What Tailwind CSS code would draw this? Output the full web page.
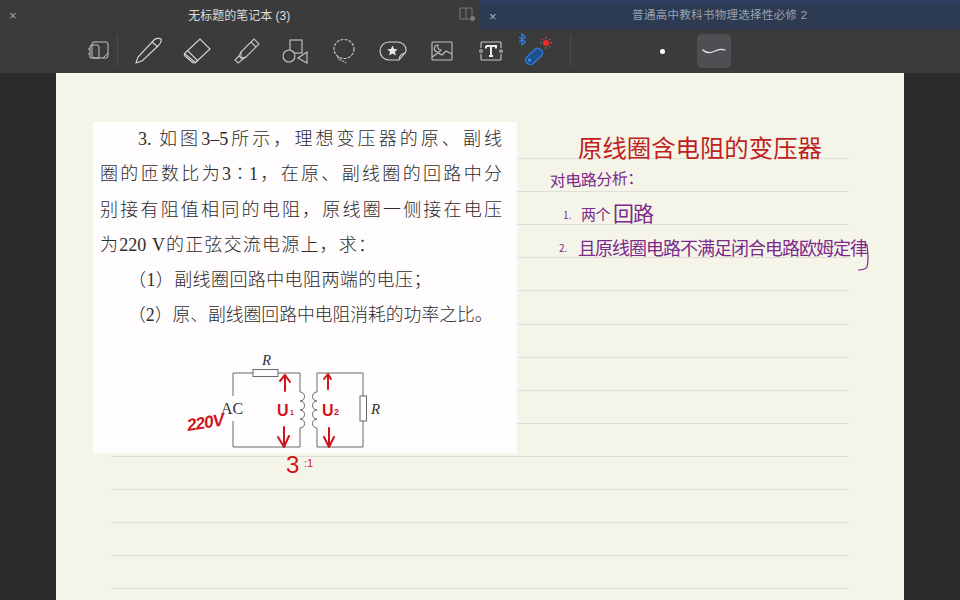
<!DOCTYPE html>
<html lang="zh-CN">
<head>
<meta charset="UTF-8">
<title>无标题的笔记本 (3)</title>
<script src="https://cdn.jsdelivr.net/npm/@tailwindcss/browser@4"></script>
</head>
<body class="w-[960px] h-[600px] overflow-hidden bg-[#2a2a2b] font-['Liberation_Sans','Noto_Sans_CJK_SC',sans-serif]">

  <!-- tabs -->
  <div class="flex h-[29px]">
    <div class="relative w-[480px] bg-[#3b3b3c] flex items-center pl-[9px] pt-[2px]">
      <span class="text-[#a5a5a5] text-[13px] leading-none">×</span>
      <span class="flex-1 text-center text-[#dcdcdc] text-[12px] pl-[3px]">无标题的笔记本 (3)</span>
      <svg class="w-[18px] h-[16px] mr-[3px] mb-[1px]" viewBox="0 0 18 16" fill="none" stroke="#7c7c7e" stroke-width="1">
        <rect x="1" y="1" width="12" height="11" rx="1" />
        <path d="M7 1v11" />
        <circle cx="13.5" cy="11.5" r="3" fill="#7c7c7e" stroke="#3b3b3c" />
      </svg>
    </div>
    <div class="w-[480px] bg-[#2c3a52] border-t-[3px] border-[#2e4163] flex items-center pl-[9px]">
      <span class="text-[#a6adba] text-[13px] leading-none">×</span>
      <span class="flex-1 text-center text-[#9aa2b0] text-[11.5px] tracking-[0.3px] pr-[17px]">普通高中教科书物理选择性必修 2</span>
    </div>
  </div>

  <!-- toolbar -->
  <div class="h-[44px] bg-[#3b3b3c] flex items-center pl-[83px]">
    <svg class="w-[30px] h-[30px] shrink-0" viewBox="0 0 30 30" fill="none" stroke="#c4c4c4" stroke-width="1">
      <rect x="9" y="6" width="16" height="16" rx="2" />
      <path d="M12 9h-3a2 2 0 0 0-2 2v11h9V11a2 2 0 0 0-2-2z M7 13H5 M7 18H5 M20 22l5-5" />
    </svg>
    <div class="w-px h-[32px] bg-[#4d4d4e] ml-[4px] mr-[15px] shrink-0"></div>
    <div class="flex items-center gap-[19px]">
      <!-- pen -->
      <svg class="w-[30px] h-[30px]" viewBox="0 0 30 30" fill="none" stroke="#d6d6d6" stroke-width="1.1">
        <path d="M3 27l2-6L21 4c2-2 6-2 7-1 1 2-1 5-3 7L9 25z" />
        <path d="M19 6l6 5" />
      </svg>
      <!-- eraser -->
      <svg class="w-[30px] h-[30px]" viewBox="0 0 30 30" fill="none" stroke="#d6d6d6" stroke-width="1.1">
        <path d="M3 17L18 3l10 10-14 13c-1 1-3 1-4 0l-7-6c-1-1-1-2 0-3z" />
        <path d="M3 18l11 9 M6 15l10 10" />
      </svg>
      <!-- highlighter -->
      <svg class="w-[30px] h-[30px]" viewBox="0 0 30 30" fill="none" stroke="#c8c8c8" stroke-width="1.1">
        <path d="M10 16L23 3l5 5-13 13-5 1z" />
        <path d="M10 16l-2 4 4 3 3-2 M8 20l-4 4 3 3 5-4 M20 6l5 5" />
      </svg>
      <!-- shapes -->
      <svg class="w-[30px] h-[30px]" viewBox="0 0 30 30" fill="none" stroke="#c8c8c8" stroke-width="1.1">
        <rect x="10" y="4" width="12" height="13" />
        <circle cx="9" cy="20" r="6" fill="#3b3b3c" />
        <path d="M27 16v11l-9-5z" fill="#3b3b3c" />
      </svg>
      <!-- lasso -->
      <svg class="w-[30px] h-[30px]" viewBox="0 0 30 30" fill="none" stroke="#c8c8c8" stroke-width="1.1">
        <ellipse cx="15" cy="13" rx="10" ry="9.5" stroke-dasharray="3 1.2" />
        <path d="M9 21c0 3 3 3 5 4l3 2" stroke-dasharray="2 1" />
      </svg>
      <!-- sticker -->
      <svg class="w-[30px] h-[30px]" viewBox="0 0 30 30" fill="none" stroke="#d6d6d6" stroke-width="1.1">
        <path d="M11 6h8c5 0 9 3 9 8 0 1 0 2-1 3l-6 7H11C6 24 2 20 2 15s4-9 9-9z" />
        <path d="M21 24c0-4 2-6 6-7" />
        <path d="M14.5 9.500l1.600 3.400 3.600.4-2.700 2.500.8 3.600-3.300-1.800-3.300 1.800.8-3.600-2.700-2.500 3.600-.4z" fill="#e8e8e8" stroke="none" />
      </svg>
      <!-- image -->
      <svg class="w-[30px] h-[30px]" viewBox="0 0 30 30" fill="none" stroke="#c0c0c0" stroke-width="1.1">
        <rect x="5" y="6" width="20" height="18" rx="1" />
        <path d="M5 21l6-4 4 2 4-4 6 3" />
        <path d="M11 9a3.500 3.500 0 1 0 3 5 3.500 3.500 0 0 1-3-5z" />
      </svg>
      <!-- text box -->
      <svg class="w-[30px] h-[30px]" viewBox="0 0 30 30" fill="none" stroke="#c8c8c8" stroke-width="1.1">
        <path d="M5 12V7a1 1 0 0 1 1-1h18a1 1 0 0 1 1 1v5 M25 18v5a1 1 0 0 1-1 1H6a1 1 0 0 1-1-1v-5" />
        <circle cx="5" cy="15" r="1.300" />
        <circle cx="25" cy="15" r="1.300" />
        <path d="M10 10h10v2.500 M10 10v2.500 M15 10v10 M13 20h4" stroke="#ececec" stroke-width="2" />
      </svg>
      <!-- laser pen, bluetooth -->
      <svg class="w-[36px] h-[32px] -ml-[6px] mb-[4px]" viewBox="0 0 36 32" fill="none">
        <path d="M3 1l3.500 3-3 2.500 3 2.500-3.500 3V1z M0 4l3.500 2.500L0 9" stroke="#2d7fdc" stroke-width="1.200" />
        <rect x="5.500" y="19" width="19" height="9" rx="3.500" transform="rotate(-43 15 23.500)" stroke="#2f79d4" stroke-width="1.400" fill="#1f4f8f" />
        <circle cx="10.500" cy="27" r="1.500" fill="#3d9bf5" />
        <circle cx="27" cy="10" r="3" fill="#f02a2a" />
        <path d="M27 4v2 M27 14v2 M21 10h2 M31 10h2 M22.800 5.800l1.400 1.400 M29.800 12.800l1.400 1.400 M31.200 5.800l-1.400 1.400" stroke="#e05a4a" stroke-width="1" />
      </svg>
    </div>
    <div class="w-px h-[32px] bg-[#4d4d4e] ml-[15px] shrink-0"></div>
    <div class="w-[5px] h-[5px] rounded-full bg-white ml-[89px] shrink-0"></div>
    <div class="w-[34px] h-[34px] rounded-[5px] bg-[#4e4e53] ml-[32px] mb-[1px] flex items-center justify-center shrink-0">
      <svg class="w-[26px] h-[12px]" viewBox="0 0 26 12" fill="none">
        <path d="M2 5c4 4 8 3 12 1s7-2 10-1" stroke="#e8e8e8" stroke-width="1.300" stroke-linecap="round" />
      </svg>
    </div>
  </div>

  <!-- note page -->
  <div class="relative mx-[56px] h-[527px] bg-[#f5f4e8] overflow-hidden">
    <!-- ruled lines -->
    <div class="absolute left-[55px] top-[53px] w-[738px] flex flex-col">
      <div class="h-[33.100px] border-b border-[#dfdfd6]"></div>
      <div class="h-[33.100px] border-b border-[#dfdfd6]"></div>
      <div class="h-[33.100px] border-b border-[#dfdfd6]"></div>
      <div class="h-[33.100px] border-b border-[#dfdfd6]"></div>
      <div class="h-[33.100px] border-b border-[#dfdfd6]"></div>
      <div class="h-[33.100px] border-b border-[#dfdfd6]"></div>
      <div class="h-[33.100px] border-b border-[#dfdfd6]"></div>
      <div class="h-[33.100px] border-b border-[#dfdfd6]"></div>
      <div class="h-[33.100px] border-b border-[#dfdfd6]"></div>
      <div class="h-[33.100px] border-b border-[#dfdfd6]"></div>
      <div class="h-[33.100px] border-b border-[#dfdfd6]"></div>
      <div class="h-[33.100px] border-b border-[#dfdfd6]"></div>
      <div class="h-[33.100px] border-b border-[#dfdfd6]"></div>
      <div class="h-[33.100px] border-b border-[#dfdfd6]"></div>
    </div>

    <!-- pasted question -->
    <div class="absolute left-[37px] top-[49px] w-[424px] h-[331px] bg-[#fefcfd] text-[#2e2c2c] text-[18px] leading-[35.300px] font-['Liberation_Serif','Noto_Sans_CJK_SC',serif] font-light">
      <p class="ml-[45px] w-[364px] whitespace-nowrap [text-align-last:justify]">3. 如图3–5所示，理想变压器的原、副线</p>
      <p class="ml-[7px] w-[402px] whitespace-nowrap [text-align-last:justify]">圈的匝数比为3∶1，在原、副线圈的回路中分</p>
      <p class="ml-[7px] w-[402px] whitespace-nowrap [text-align-last:justify]">别接有阻值相同的电阻，原线圈一侧接在电压</p>
      <p class="ml-[7px] w-[276px] whitespace-nowrap [text-align-last:justify]">为220 V的正弦交流电源上，求：</p>
      <p class="ml-[35px] w-[314px] tracking-[0.4px] whitespace-nowrap">（1）副线圈回路中电阻两端的电压；</p>
      <p class="ml-[35px] w-[376px] text-[17.800px] whitespace-nowrap">（2）原、副线圈回路中电阻消耗的功率之比。</p>
    </div>

    <!-- heading -->
    <p class="absolute left-[522px] top-[59px] text-[24.400px] leading-[34px] text-[#bf1f1f] whitespace-nowrap">原线圈含电阻的变压器</p>

    <!-- circuit and ink, page coordinates -->
    <svg class="absolute inset-0 w-[848px] h-[527px]" viewBox="56 73 848 527" fill="none">
      <g stroke="#6b6b6b" stroke-width="1">
        <path d="M233 396V373H253 M278 373H300V392 M300 428V447H233V421" />
        <rect x="253" y="369.500" width="25" height="7" fill="#fefcfd" />
        <path d="M300 392c6 0 6 9 0 9c6 0 6 9 0 9c6 0 6 9 0 9c6 0 6 9 0 9" />
        <path d="M317 392c-6 0-6 9 0 9c-6 0-6 9 0 9c-6 0-6 9 0 9c-6 0-6 9 0 9" />
        <path d="M317 392V373H363V396 M363 421V447H317V428" />
        <rect x="360" y="396" width="6.500" height="25" fill="#fefcfd" />
      </g>
      <g fill="#333" font-family="'Liberation Serif',serif" font-size="16">
        <text x="221" y="414">AC</text>
        <text x="262" y="365" font-style="italic" font-size="15">R</text>
        <text x="371" y="414" font-style="italic" font-size="15">R</text>
      </g>
      <g stroke="#d0141c" stroke-width="2" stroke-linecap="round" stroke-linejoin="round">
        <path d="M285 391V375 M280 381l5-6 5 7" />
        <path d="M284 427V447 M278 437l6 10 5-11" />
        <path d="M328 389V374 M324 379l4-5 3 5" />
        <path d="M329 428V447 M324 437l5 10 5-10" />
      </g>
      <g fill="#d0141c" font-family="'Liberation Sans',sans-serif" font-weight="700">
        <text x="277" y="416" font-size="16">U</text>
        <text x="290" y="415" font-size="7">1</text>
        <text x="322" y="416" font-size="16">U</text>
        <text x="334" y="415" font-size="9">2</text>
        <text x="188" y="431" font-size="17" font-style="italic" letter-spacing="-0.800" transform="rotate(-9 188 431)">220V</text>
        <text x="286" y="473" font-size="24" font-weight="400">3</text>
        <text x="304" y="467" font-size="11" font-weight="400">:1</text>
      </g>
      <g fill="#7b2a8c" font-family="'Noto Sans CJK SC',sans-serif">
        <text x="550" y="187" font-size="16" letter-spacing="-0.500" transform="rotate(-2 550 187)">对电路分析：</text>
        <text x="563" y="219" font-size="10">1.</text>
        <text x="581" y="220" font-size="15" letter-spacing="-0.500">两个</text>
        <text x="613" y="221" font-size="21" letter-spacing="-1">回路</text>
        <text x="559" y="252" font-size="10">2.</text>
        <text x="578" y="255" font-size="18" letter-spacing="-1">且原线圈电路不满足闭合电路欧姆定律</text>
      </g>
      <path d="M867 245c1 8 2 16 0 22-2 3-6 3-9 3" stroke="#7b2a8c" stroke-width="1.200" />
    </svg>
  </div>
</body>
</html>
